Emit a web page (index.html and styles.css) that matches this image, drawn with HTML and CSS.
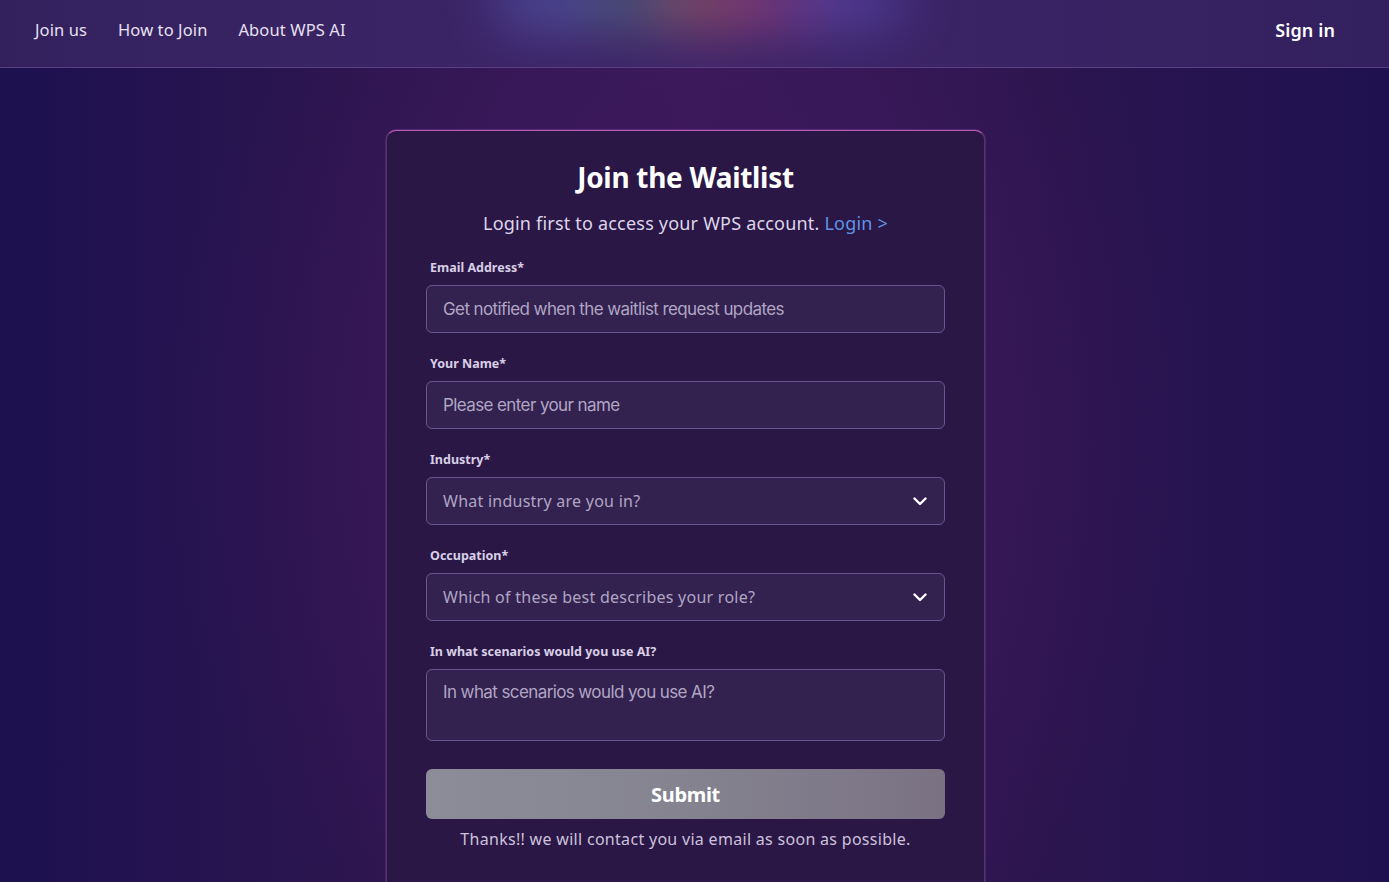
FILE: index.html
```html
<!DOCTYPE html>
<html lang="en">
<head>
<meta charset="utf-8">
<title>Join the Waitlist - WPS AI</title>
<link rel="stylesheet" href="styles.css">
</head>
<body>
<header class="topbar">
  <div class="glow">
    <span class="blob b1"></span>
    <span class="blob b2"></span>
    <span class="blob b3"></span>
    <span class="blob b4"></span>
    <span class="blob b5"></span>
  </div>
  <nav class="nav">
    <a href="#" class="nav-link">Join us</a>
    <a href="#" class="nav-link">How to Join</a>
    <a href="#" class="nav-link">About WPS AI</a>
  </nav>
  <a href="#" class="signin">Sign in</a>
</header>
<main class="page">
  <section class="card">
    <h1 class="title">Join the Waitlist</h1>
    <p class="subtitle">Login first to access your WPS account. <a href="#" class="login">Login &gt;</a></p>
    <form class="form">
      <label class="field">
        <span class="label">Email Address*</span>
        <input class="input" type="text" placeholder="Get notified when the waitlist request updates">
      </label>
      <label class="field">
        <span class="label">Your Name*</span>
        <input class="input" type="text" placeholder="Please enter your name">
      </label>
      <div class="field">
        <span class="label">Industry*</span>
        <div class="select">
          <span class="select-text">What industry are you in?</span>
          <svg class="chev" width="14" height="9" viewBox="0 0 14 9"><path d="M1.5 1.5 L7 7 L12.5 1.5" fill="none" stroke="#ffffff" stroke-width="2.4" stroke-linecap="round" stroke-linejoin="round"/></svg>
        </div>
      </div>
      <div class="field">
        <span class="label">Occupation*</span>
        <div class="select">
          <span class="select-text">Which of these best describes your role?</span>
          <svg class="chev" width="14" height="9" viewBox="0 0 14 9"><path d="M1.5 1.5 L7 7 L12.5 1.5" fill="none" stroke="#ffffff" stroke-width="2.4" stroke-linecap="round" stroke-linejoin="round"/></svg>
        </div>
      </div>
      <label class="field">
        <span class="label">In what scenarios would you use AI?</span>
        <textarea class="input textarea" placeholder="In what scenarios would you use AI?"></textarea>
      </label>
      <button type="button" class="submit">Submit</button>
      <p class="thanks">Thanks!! we will contact you via email as soon as possible.</p>
    </form>
  </section>
</main>
</body>
</html>
```

FILE: styles.css
```css
* { box-sizing: border-box; }

html, body {
  margin: 0;
  height: 100%;
}

body {
  font-family: "Noto Sans", "Open Sans", sans-serif;
  color: #ffffff;
  background:
    radial-gradient(ellipse 520px 640px at 685px 440px, rgba(88, 26, 104, 0.85) 0%, rgba(66, 24, 94, 0.55) 45%, rgba(40, 20, 80, 0) 100%),
    linear-gradient(90deg, #1d1150 0%, #2b154f 25%, #371a59 50%, #2b154f 75%, #1f1150 100%);
  overflow: hidden;
}

.topbar {
  position: relative;
  height: 68px;
  display: flex;
  align-items: center;
  justify-content: space-between;
  padding: 0 54px 8px 35px;
  background: linear-gradient(90deg, #33215e 0%, #40266a 50%, #33205e 100%);
  border-bottom: 1px solid #5a3f85;
  overflow: hidden;
}

.glow {
  position: absolute;
  left: 470px;
  top: -40px;
  width: 440px;
  height: 110px;
  filter: blur(24px);
  pointer-events: none;
}

.blob {
  position: absolute;
  top: 6px;
  width: 120px;
  height: 70px;
  border-radius: 50%;
  opacity: 0.5;
}
.b1 { left: 20px; background: #5560b8; }
.b2 { left: 105px; background: #4f7080; }
.b3 { left: 180px; background: #a85a5e; }
.b4 { left: 250px; background: #903e84; }
.b5 { left: 320px; background: #5a4ab4; }

.nav {
  position: relative;
  display: flex;
  gap: 31px;
}

.nav-link, .signin {
  position: relative;
  color: #e6e0f0;
  text-decoration: none;
  font-size: 16.5px;
  letter-spacing: 0.1px;
}

.signin {
  color: #ffffff;
  font-size: 18px;
  font-weight: 600;
}

.page {
  display: flex;
  justify-content: center;
  padding: 62px 18px 0 0;
}

.card {
  width: 599px;
  padding: 25px 39px 60px;
  background: #2a1745;
  border: 1px solid rgba(120, 90, 150, 0.45);
  border-top-color: #b65ab5;
  border-radius: 10px;
  box-shadow: 0 -1px 0 rgba(200, 100, 200, 0.25), -1px 0 0 rgba(170, 80, 170, 0.25), 1px 0 0 rgba(170, 80, 170, 0.25);
}

.title {
  margin: 3px 0 0;
  text-align: center;
  font-size: 28px;
  font-weight: 700;
  letter-spacing: -0.3px;
  line-height: 36px;
}

.subtitle {
  margin: 16px 0 0;
  text-align: center;
  font-size: 18px;
  color: #ddd5ea;
  line-height: 24px;
  letter-spacing: 0.2px;
}

.login {
  color: #5e93e6;
  text-decoration: none;
}

.form {
  display: flex;
  flex-direction: column;
  margin-top: 24px;
}

.field {
  display: flex;
  flex-direction: column;
  margin-bottom: 22px;
}

.label {
  font-size: 12.5px;
  font-weight: 700;
  color: #d8cfe6;
  padding-left: 4px;
  line-height: 18px;
  margin-bottom: 8px;
}

.input, .select {
  width: 100%;
  height: 48px;
  background: #33214f;
  border: 1px solid #6b5590;
  border-radius: 6px;
  padding: 0 16px;
  color: #ffffff;
  outline: none;
}

.input {
  font-family: "Inter", sans-serif;
  font-size: 17px;
  letter-spacing: -0.6px;
}

.input::placeholder {
  color: #b0a6c4;
  opacity: 1;
}

.textarea {
  height: 72px;
  padding-top: 12px;
  resize: none;
  display: block;
}

.select {
  display: flex;
  align-items: center;
  justify-content: space-between;
  padding-right: 17px;
}

.select-text {
  font-size: 16px;
  color: #b0a6c4;
  letter-spacing: 0.25px;
}

.chev {
  display: block;
}

.submit {
  margin-top: 6px;
  height: 50px;
  width: 100%;
  border: none;
  border-radius: 6px;
  background: linear-gradient(90deg, #8c8d99 0%, #858390 50%, #7a7283 100%);
  color: #ffffff;
  font-family: "Noto Sans", "Open Sans", sans-serif;
  font-size: 20px;
  font-weight: 700;
  letter-spacing: -0.3px;
  cursor: pointer;
}

.thanks {
  margin: 9px 0 0;
  text-align: center;
  font-size: 16px;
  color: #cdc2dd;
  line-height: 22px;
  letter-spacing: 0.3px;
}
```
